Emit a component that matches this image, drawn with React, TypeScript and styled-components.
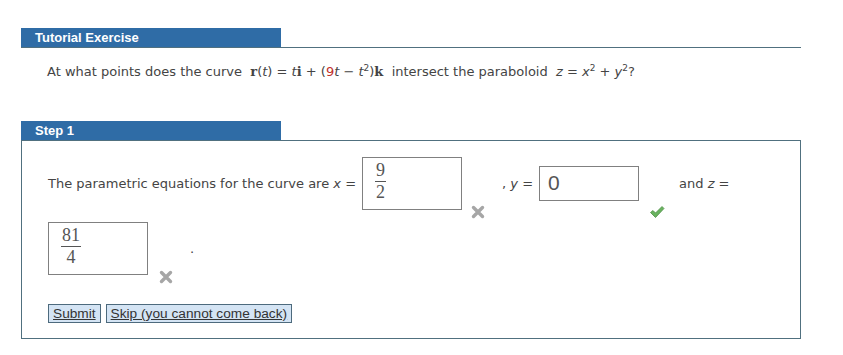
import React from 'react'
import styled, { createGlobalStyle } from 'styled-components'

const GlobalStyle = createGlobalStyle`
    body {
        margin: 0;
        background: #ffffff;
        font-family: 'DejaVu Sans', Verdana, sans-serif;
    }
`

const Page = styled.div`
    width: 780px;
    padding: 28px 0 0 21px;
`

const HeaderRow = styled.div`
    display: flex;
    border-bottom: 1px solid #50707f;
`

const Tab = styled.div`
    width: 260px;
    height: 19px;
    box-sizing: border-box;
    padding: 1px 0 0 14px;
    background: #2f6ca6;
    color: #ffffff;
    font-family: 'Liberation Sans', Arial, sans-serif;
    font-weight: 700;
    font-size: 13px;
    line-height: 18px;
`

const Question = styled.p`
    margin: 16px 0 0 26px;
    font-size: 13px;
    line-height: 16px;
    color: #444444;
`

const StepTab = styled(Tab)`
    margin-top: 41px;
`

const StepBox = styled.div`
    border: 1px solid #50707f;
    padding: 16px 26px 15px 26px;
`

const AnswerRow = styled.div`
    display: flex;
    flex-wrap: wrap;
    align-items: center;
    row-gap: 12px;
    font-size: 13px;
    line-height: 16px;
    color: #444444;
`

const Label = styled.span<{ $gap?: number }>`
    margin-right: ${(p) => p.$gap ?? 6}px;
    white-space: pre;
`

const I = styled.i`
    font-style: italic;
`

const B = styled.b`
    font-weight: 700;
    font-family: 'DejaVu Serif', 'Liberation Serif', serif;
`

const Red = styled.span`
    color: #c0302a;
`

const Sup = styled.sup`
    font-size: 9px;
    line-height: 0;
    vertical-align: 5px;
`

const AnswerBox = styled.div<{ $tall?: boolean }>`
    box-sizing: border-box;
    width: 100px;
    height: ${(p) => (p.$tall ? 53 : 35)}px;
    border: 1px solid #808080;
    display: flex;
    align-items: center;
    padding-left: ${(p) => (p.$tall ? 12 : 8)}px;
    padding-bottom: ${(p) => (p.$tall ? 4 : 2)}px;
    color: #555555;
`

const Fraction = styled.span`
    display: inline-flex;
    flex-direction: column;
    align-items: center;
    font-family: 'Liberation Serif', 'Times New Roman', serif;
    font-size: 18px;
    line-height: 17px;
    color: #555555;
`

const Numer = styled.span`
    padding: 0 1px 2px 1px;
    border-bottom: 1px solid #555555;
`

const Denom = styled.span`
    padding-top: 2px;
`

const Plain = styled.span`
    font-family: 'Liberation Sans', Arial, sans-serif;
    font-size: 21px;
    line-height: 24px;
    color: #555555;
`

const Mark = styled.span<{ $before?: number; $after?: number }>`
    align-self: flex-end;
    display: inline-flex;
    margin: 0 ${(p) => p.$after ?? 16}px -9px ${(p) => p.$before ?? 8}px;
    width: 16px;
    height: 14px;
`

const Buttons = styled.div`
    display: flex;
    gap: 5px;
    margin-top: 29px;
`

const Button = styled.button`
    height: 19px;
    padding: 0 4px;
    border: 1px solid #4d6a7d;
    background: #d4e4f4;
    color: #333333;
    font-family: 'Liberation Sans', Arial, sans-serif;
    font-size: 13.7px;
    line-height: 16px;
    text-decoration: underline;
    cursor: pointer;
`

const Cross = () => (
    <svg width="16" height="14" viewBox="0 0 16 14">
        <path
            d="M3.5 2.5 L12.5 11.5 M12.5 2.5 L3.5 11.5"
            stroke="#a6a6a6"
            strokeWidth="3.4"
            strokeLinecap="round"
        />
    </svg>
)

const Check = () => (
    <svg width="16" height="14" viewBox="0 0 16 14">
        <path
            d="M1.5 7.5 L4 5.5 L6.5 8 L13 1.5 L15 3.5 L6.5 12.5 Z"
            fill="#69b35f"
            stroke="#4f8f48"
            strokeWidth="0.8"
            strokeLinejoin="round"
        />
    </svg>
)

export default function App() {
    return (
        <Page>
            <GlobalStyle />
            <HeaderRow>
                <Tab>Tutorial Exercise</Tab>
            </HeaderRow>
            <Question>
                At what points does the curve&nbsp; <B>r</B>(<I>t</I>) = <I>t</I>
                <B>i</B> + (<Red>9</Red>
                <I>t</I> − <I>t</I>
                <Sup>2</Sup>)<B>k</B>&nbsp; intersect the paraboloid&nbsp; <I>z</I> ={' '}
                <I>x</I>
                <Sup>2</Sup> + <I>y</I>
                <Sup>2</Sup>?
            </Question>

            <StepTab>Step 1</StepTab>
            <StepBox>
                <AnswerRow>
                    <Label>
                        The parametric equations for the curve are <I>x</I> =
                    </Label>
                    <AnswerBox $tall>
                        <Fraction>
                            <Numer>9</Numer>
                            <Denom>2</Denom>
                        </Fraction>
                    </AnswerBox>
                    <Mark>
                        <Cross />
                    </Mark>
                    <Label>
                        , <I>y</I> =
                    </Label>
                    <AnswerBox>
                        <Plain>0</Plain>
                    </AnswerBox>
                    <Mark $before={10} $after={14}>
                        <Check />
                    </Mark>
                    <Label>
                        and <I>z</I> =
                    </Label>
                    <AnswerBox $tall>
                        <Fraction>
                            <Numer>81</Numer>
                            <Denom>4</Denom>
                        </Fraction>
                    </AnswerBox>
                    <Mark $before={10}>
                        <Cross />
                    </Mark>
                    <Label>.</Label>
                </AnswerRow>
                <Buttons>
                    <Button>Submit</Button>
                    <Button>Skip (you cannot come back)</Button>
                </Buttons>
            </StepBox>
        </Page>
    )
}
